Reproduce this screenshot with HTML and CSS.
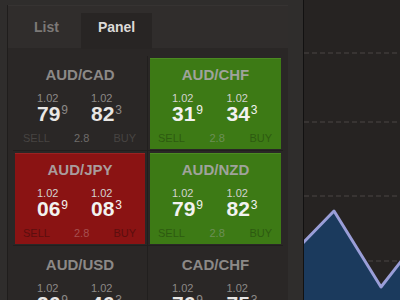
FILE: index.html
```html
<!DOCTYPE html>
<html lang="en">
<head>
    <meta charset="UTF-8">
    <meta name="viewport" content="width=device-width, initial-scale=1.0">
    <title>Rates Panel</title>
    <link rel="stylesheet" href="styles.css">
</head>
<body>
    <div class="panel">
        <div class="tab-bar">
            <div class="tab">List</div>
            <div class="tab active">Panel</div>
        </div>

        <div class="grid">
            <div class="cell">
                <div class="tile">
                    <div class="pair">AUD/CAD</div>
                    <div class="prices">
                        <div class="price"><span class="base">1.02</span><span class="big">79<sup>9</sup></span></div>
                        <div class="price"><span class="base">1.02</span><span class="big">82<sup>3</sup></span></div>
                    </div>
                    <div class="labels"><span>SELL</span><span class="spread">2.8</span><span>BUY</span></div>
                </div>
            </div>
            <div class="cell">
                <div class="tile up">
                    <div class="pair">AUD/CHF</div>
                    <div class="prices">
                        <div class="price"><span class="base">1.02</span><span class="big">31<sup>9</sup></span></div>
                        <div class="price"><span class="base">1.02</span><span class="big">34<sup>3</sup></span></div>
                    </div>
                    <div class="labels"><span>SELL</span><span class="spread">2.8</span><span>BUY</span></div>
                </div>
            </div>
            <div class="cell">
                <div class="tile down">
                    <div class="pair">AUD/JPY</div>
                    <div class="prices">
                        <div class="price"><span class="base">1.02</span><span class="big">06<sup>9</sup></span></div>
                        <div class="price"><span class="base">1.02</span><span class="big">08<sup>3</sup></span></div>
                    </div>
                    <div class="labels"><span>SELL</span><span class="spread">2.8</span><span>BUY</span></div>
                </div>
            </div>
            <div class="cell">
                <div class="tile up">
                    <div class="pair">AUD/NZD</div>
                    <div class="prices">
                        <div class="price"><span class="base">1.02</span><span class="big">79<sup>9</sup></span></div>
                        <div class="price"><span class="base">1.02</span><span class="big">82<sup>3</sup></span></div>
                    </div>
                    <div class="labels"><span>SELL</span><span class="spread">2.8</span><span>BUY</span></div>
                </div>
            </div>
            <div class="cell">
                <div class="tile">
                    <div class="pair">AUD/USD</div>
                    <div class="prices">
                        <div class="price"><span class="base">1.02</span><span class="big">36<sup>9</sup></span></div>
                        <div class="price"><span class="base">1.02</span><span class="big">46<sup>3</sup></span></div>
                    </div>
                    <div class="labels"><span>SELL</span><span class="spread">2.8</span><span>BUY</span></div>
                </div>
            </div>
            <div class="cell">
                <div class="tile">
                    <div class="pair">CAD/CHF</div>
                    <div class="prices">
                        <div class="price"><span class="base">1.02</span><span class="big">76<sup>9</sup></span></div>
                        <div class="price"><span class="base">1.02</span><span class="big">75<sup>3</sup></span></div>
                    </div>
                    <div class="labels"><span>SELL</span><span class="spread">2.8</span><span>BUY</span></div>
                </div>
            </div>
        </div>
    </div>

    <div class="chart">
        <svg width="96" height="300" viewBox="0 0 96 300">
            <line class="grid-line" x1="0" y1="53" x2="96" y2="53"/>
            <line class="grid-line" x1="0" y1="122" x2="96" y2="122"/>
            <line class="grid-line" x1="0" y1="196" x2="96" y2="196"/>
            <line class="grid-line" x1="0" y1="261" x2="96" y2="261"/>
            <polygon class="area" points="0,242 30,211 77,287 96,262 96,300 0,300"/>
            <polyline class="stroke" points="-2,244 30,211 77,287 98,260"/>
        </svg>
    </div>
</body>
</html>
```

FILE: styles.css
```css
body {
    margin: 0;
    padding: 0;
    width: 400px;
    height: 300px;
    background-color: #2f2d2c;
    display: flex;
    font-family: 'Liberation Sans', Arial, sans-serif;
    overflow: hidden;
}

.panel {
    width: 280px;
    margin: 5px 0 0 8px;
    background-color: #2a2726;
    box-shadow: -1px 0 0 #1f1d1c;
    display: flex;
    flex-direction: column;
}

.tab-bar {
    height: 43px;
    box-sizing: border-box;
    padding: 7px 0 0 9px;
    display: flex;
    gap: 5px;
    background-color: #302d2c;
    border-top: 1px solid #363332;
}

.tab {
    height: 36px;
    box-sizing: border-box;
    padding: 7px 17px 0;
    font-size: 14px;
    line-height: 15px;
    font-weight: bold;
    color: #7c7977;
}

.tab.active {
    background-color: #282524;
    color: #dcdad8;
}

.grid {
    display: grid;
    grid-template-columns: 135px 135px;
    grid-auto-rows: 95px;
    padding: 8px 0 0 5px;
}

.cell {
    padding: 2px;
    border-right: 1px solid #211f1e;
    border-bottom: 1px solid #211f1e;
}

.cell:nth-child(2n) {
    border-right: none;
}

.tile {
    height: 91px;
    box-sizing: border-box;
    padding-top: 9px;
    color: #8c8987;
}

.tile.up {
    background-color: #3d7a15;
    box-shadow: inset 0 1px 0 #4b8a22;
}

.tile.down {
    background-color: #8a1313;
    box-shadow: inset 0 1px 0 #9a2222;
}

.pair {
    text-align: center;
    font-size: 15px;
    font-weight: bold;
    line-height: 16px;
}

.tile.up .pair {
    color: #9fa39b;
}

.tile.down .pair {
    color: #a99c9c;
}

.prices {
    display: flex;
    margin-top: 9px;
    padding-left: 22px;
}

.price {
    width: 60px;
    display: flex;
    flex-direction: column;
}

.base {
    font-size: 11px;
    line-height: 12px;
}

.tile.up .base,
.tile.down .base {
    color: #d2d2d0;
}

.big {
    font-size: 21px;
    font-weight: bold;
    line-height: 20px;
    color: #e8e6e4;
}

.big sup {
    font-size: 12px;
    font-weight: normal;
    vertical-align: top;
    line-height: 12px;
    margin-left: 1px;
    color: #8c8987;
}

.tile.up .big,
.tile.down .big,
.tile.up .big sup,
.tile.down .big sup {
    color: #f2f2f0;
}

.labels {
    display: flex;
    justify-content: space-between;
    padding: 0 9px 0 8px;
    margin-top: 8px;
    font-size: 11px;
    line-height: 12px;
    color: #474442;
}

.labels .spread {
    color: #6f6c6a;
}

.tile.up .labels {
    color: #2d5a10;
}

.tile.up .labels .spread {
    color: #6c8f55;
}

.tile.down .labels {
    color: #5c0e0e;
}

.tile.down .labels .spread {
    color: #a65050;
}

.chart {
    margin-left: 15px;
    flex: 1;
    background-color: #262322;
    border-left: 1px solid #121111;
}

.chart svg {
    display: block;
}

.grid-line {
    stroke: #4a4745;
    stroke-width: 1;
    stroke-dasharray: 5 3;
}

.area {
    fill: #1b3a5d;
}

.stroke {
    fill: none;
    stroke: #9a9ed8;
    stroke-width: 3;
    stroke-linejoin: round;
}
```
